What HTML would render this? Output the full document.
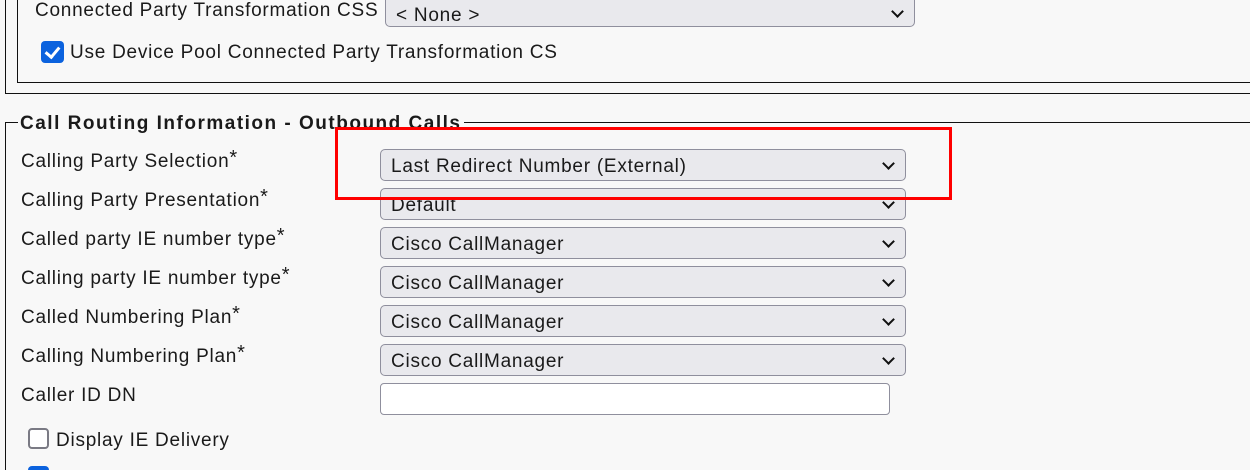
<!DOCTYPE html>
<html style="width:1250px;height:470px;overflow:hidden"><head><style>
body{margin:0;width:1250px;height:470px;background:#f8f8f8;font-family:"Liberation Sans",sans-serif;font-size:19px;letter-spacing:0.75px;color:#1a1a1a;position:relative;overflow:hidden}
.a{position:absolute}
.l{position:absolute;left:21px;white-space:nowrap}
.l sup{font-size:20px;vertical-align:0;position:relative;top:-3px;line-height:0}
.s{position:absolute;left:380px;width:524px;height:30px;background:#e9e9ed;border:1px solid #8f8f9d;border-radius:5px;box-sizing:content-box}
.s span{position:absolute;left:10px;top:6px;white-space:nowrap}
.s i{position:absolute;right:12px;top:9px;width:7px;height:7px;border-right:2px solid #111;border-bottom:2px solid #111;transform:rotate(45deg)}
</style></head><body>
<div class="a" style="left:5px;top:-2px;width:1250px;height:95px;border:1px solid #111;border-top:none"></div>
<div class="a" style="left:17px;top:-2px;width:1250px;height:84px;border:1px solid #111;border-top:none"></div>
<div class="l" style="left:35px;top:0px">Connected Party Transformation CSS</div>
<div class="s" style="left:385px;top:-5px;width:528px"><span style="top:9px">&lt; None &gt;</span><i style="top:11px"></i></div>
<div class="a" style="left:41px;top:41px;width:23px;height:22px;background:#0b62de;border-radius:4px"></div>
<div class="a" style="left:48px;top:44px;width:6px;height:11px;border-right:3px solid #fff;border-bottom:3px solid #fff;transform:rotate(40deg)"></div>
<div class="l" style="left:70px;top:42px">Use Device Pool Connected Party Transformation CS</div>

<div class="a" style="left:5px;top:122px;width:1250px;height:348px;border-left:1px solid #111;border-top:1px solid #111"></div>
<div class="l" style="left:18px;top:113px;background:#f8f8f8;padding:0 3px 0 2px;font-weight:bold;letter-spacing:1.5px">Call Routing Information - Outbound Calls</div>

<div class="l" style="top:151px">Calling Party Selection<sup>*</sup></div>
<div class="l" style="top:190px">Calling Party Presentation<sup>*</sup></div>
<div class="l" style="top:229px">Called party IE number type<sup>*</sup></div>
<div class="l" style="top:268px">Calling party IE number type<sup>*</sup></div>
<div class="l" style="top:307px">Called Numbering Plan<sup>*</sup></div>
<div class="l" style="top:346px">Calling Numbering Plan<sup>*</sup></div>
<div class="l" style="top:385px">Caller ID DN</div>

<div class="s" style="top:149px"><span>Last Redirect Number (External)</span><i></i></div>
<div class="s" style="top:188px"><span>Default</span><i></i></div>
<div class="s" style="top:227px"><span>Cisco CallManager</span><i></i></div>
<div class="s" style="top:266px"><span>Cisco CallManager</span><i></i></div>
<div class="s" style="top:305px"><span>Cisco CallManager</span><i></i></div>
<div class="s" style="top:344px"><span>Cisco CallManager</span><i></i></div>
<div class="a" style="left:380px;top:383px;width:508px;height:30px;background:#fff;border:1px solid #8f8f9d;border-radius:4px"></div>

<div class="a" style="left:335px;top:127px;width:611px;height:67px;border:3px solid #f00"></div>

<div class="a" style="left:28px;top:428px;width:17px;height:17px;border:2px solid #7a7a84;border-radius:4px;background:#fff"></div>
<div class="l" style="left:56px;top:430px">Display IE Delivery</div>
<div class="a" style="left:28px;top:466px;width:21px;height:4px;background:#0b62de;border-radius:4px 4px 0 0"></div>
</body></html>
